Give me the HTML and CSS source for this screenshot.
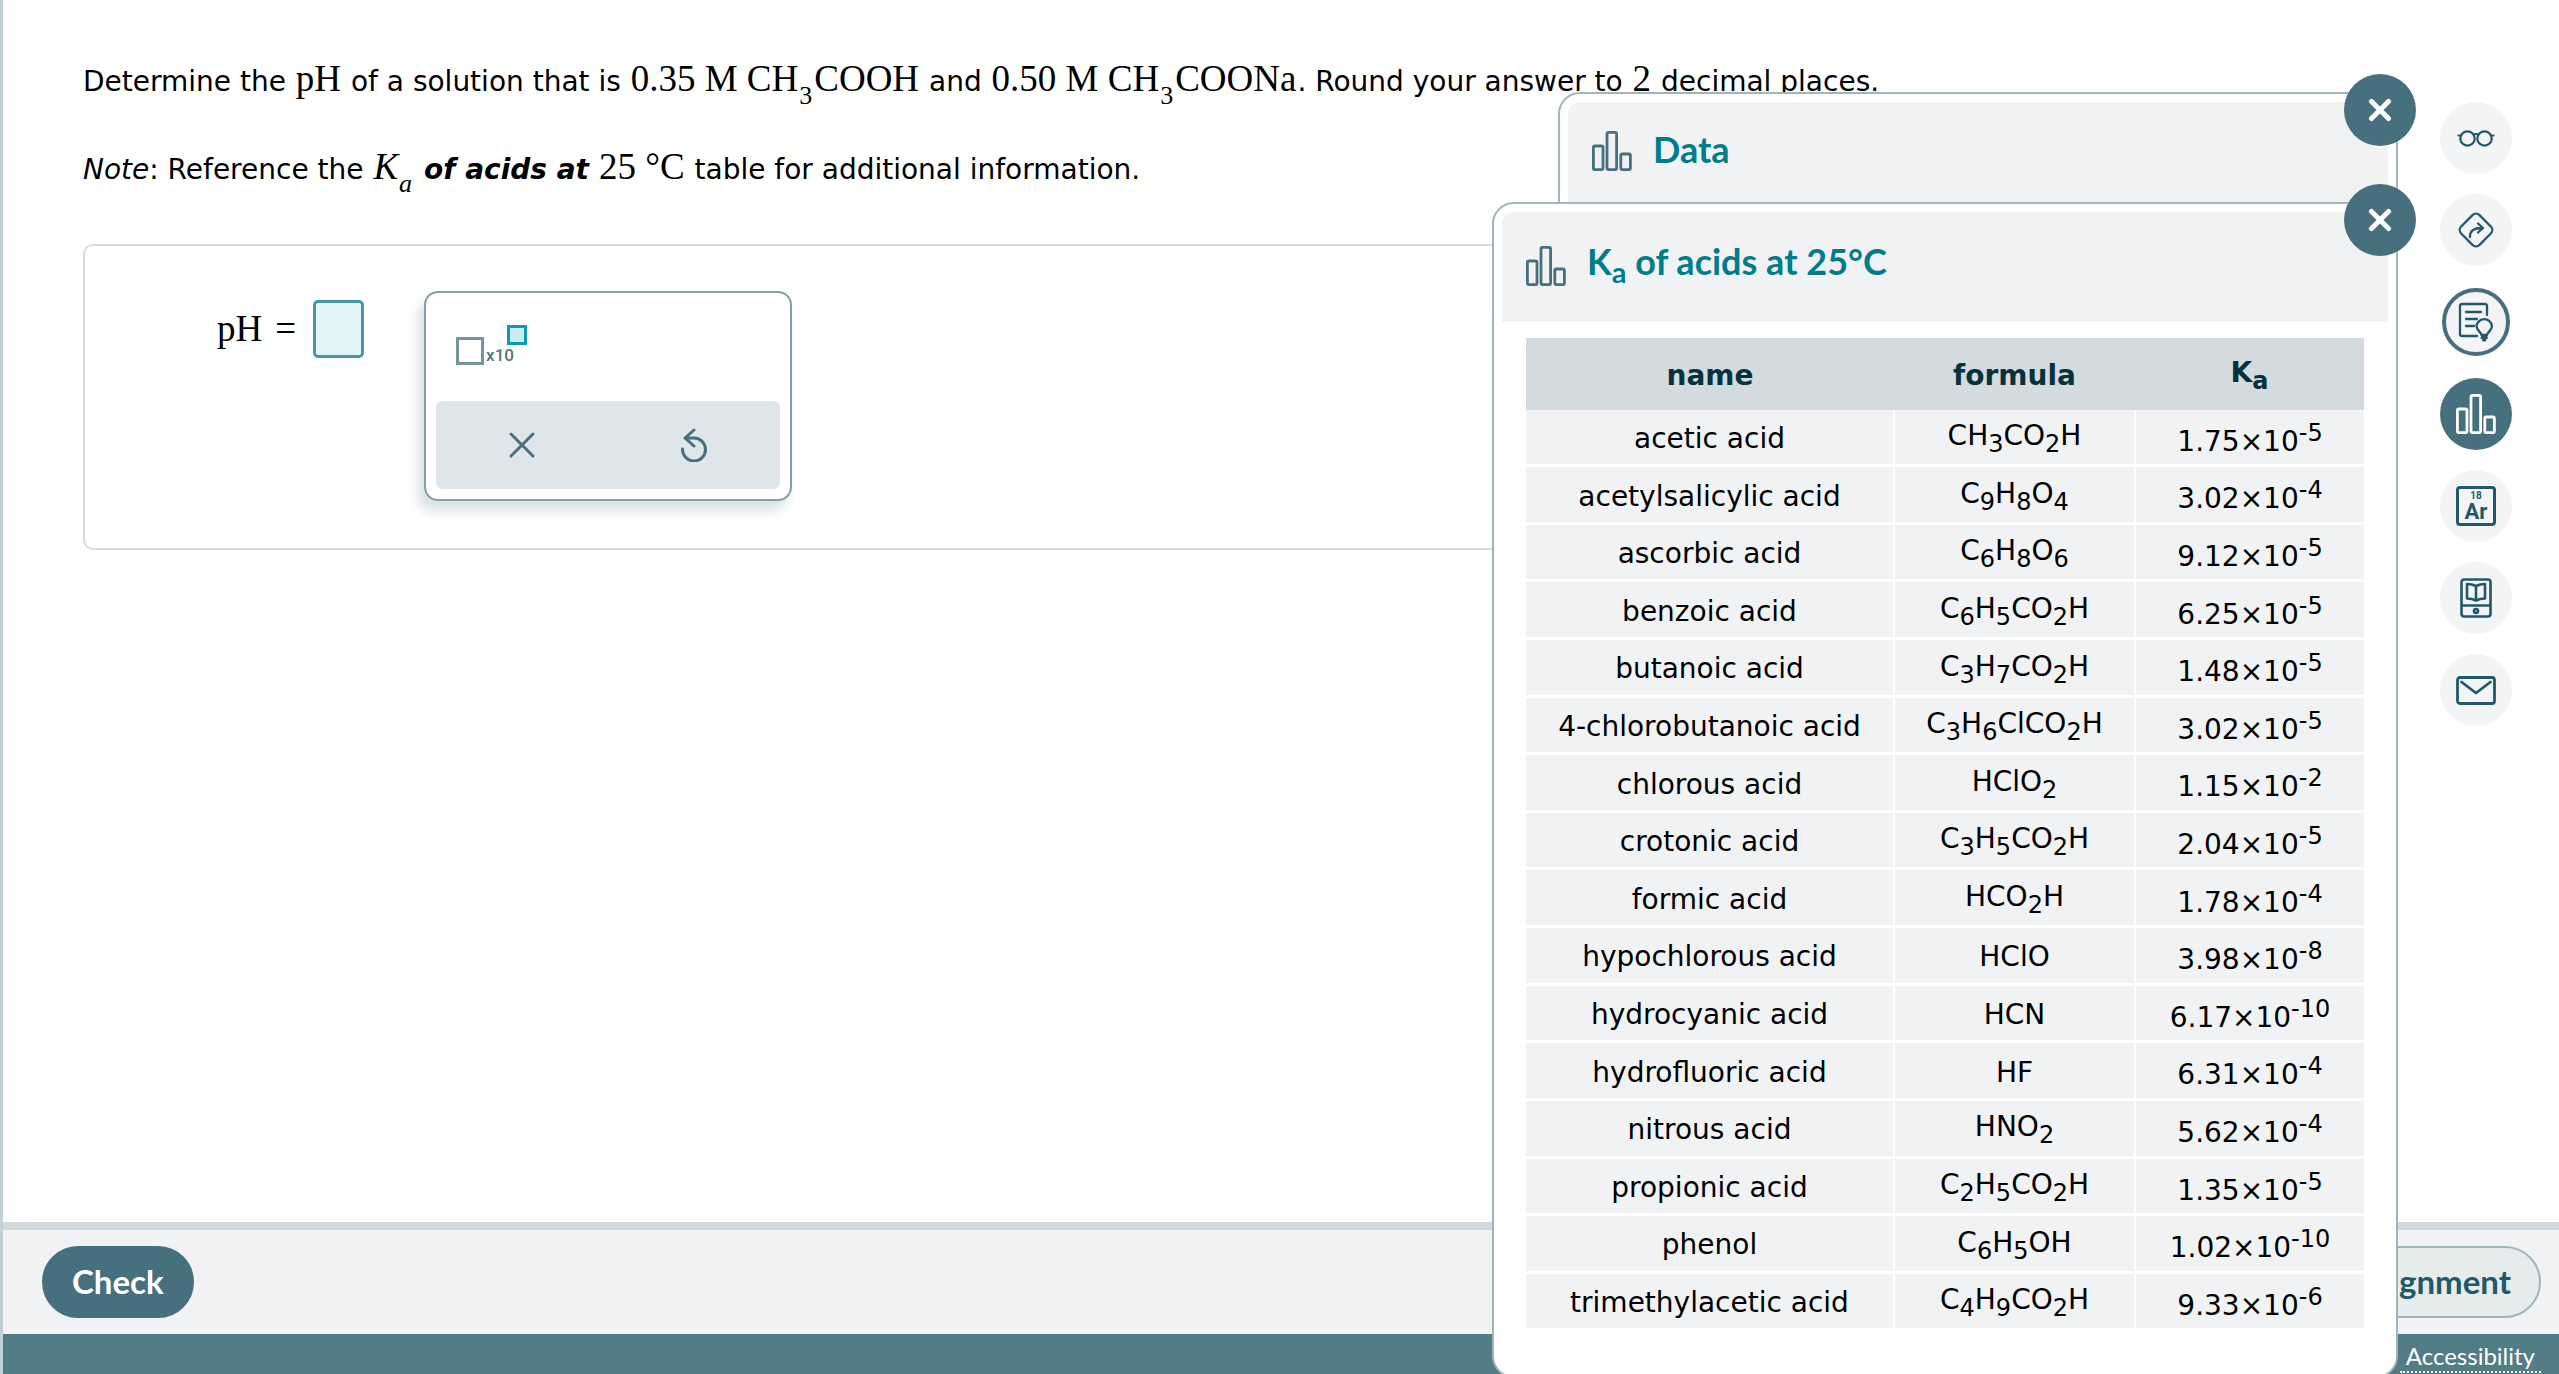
FILE: index.html
```
<!DOCTYPE html>
<html lang="en">
<head>
    <meta charset="UTF-8">
    <meta name="viewport" content="width=device-width, initial-scale=1.0">
    <title>Buffer pH</title>
    <link rel="stylesheet" href="styles.css">
</head>
<body>
    <svg class="sprite" aria-hidden="true">
        <symbol id="bars" viewBox="0 0 40 40">
            <g fill="none" stroke="currentColor" stroke-width="2.8" stroke-linejoin="round">
                <rect x="1.4" y="15" width="9.6" height="23.6" rx="1.5"/>
                <rect x="15" y="1.4" width="9.6" height="37.2" rx="1.5"/>
                <rect x="28.8" y="23" width="9.6" height="15.6" rx="1.5"/>
            </g>
        </symbol>
        <symbol id="close" viewBox="0 0 24 24">
            <path d="M3.5 3.5L20.5 20.5M20.5 3.5L3.5 20.5" fill="none" stroke="currentColor" stroke-width="5" stroke-linecap="round"/>
        </symbol>
    </svg>

    <div class="work">
        <main class="question">
            <p>Determine the <span class="math">pH</span> of a solution that is <span class="math">0.35 M CH<sub>3</sub>COOH</span> and <span class="math">0.50 M CH<sub>3</sub>COONa</span>. Round your answer to <span class="math">2</span> decimal places.</p>
            <p><i>Note</i>: Reference the <span class="math"><i>K<sub>a</sub></i></span> <b><i>of acids at</i></b> <span class="math">25 °C</span> table for additional information.</p>

            <div class="answer">
                <label class="math" for="ph">pH<span>=</span></label>
                <input type="text" id="ph" class="blank">
                <div class="palette">
                    <button class="sci" aria-label="Scientific notation">
                        <span class="sci-base"></span>
                        <span class="sci-ten">x10</span>
                        <span class="sci-exp"></span>
                    </button>
                    <div class="palette-actions">
                        <button aria-label="Clear">
                            <svg width="28" height="28" viewBox="0 0 28 28" fill="none" stroke="currentColor" stroke-width="3" stroke-linecap="round"><path d="M3 3L25 25M25 3L3 25"/></svg>
                        </button>
                        <button aria-label="Reset">
                            <svg width="28" height="34" viewBox="0 0 28 34" fill="none" stroke="currentColor" stroke-width="3" stroke-linecap="round" stroke-linejoin="round"><path d="M14 2L5 10L14 18M5 10H14A11.5 11.5 0 1 1 2.5 21"/></svg>
                        </button>
                    </div>
                </div>
            </div>
        </main>

        <nav class="rail" aria-label="Tools">
            <button aria-label="Reading view">
                <svg width="38" height="18" viewBox="0 0 38 18" fill="none" stroke="currentColor" stroke-width="2.2" stroke-linecap="round"><circle cx="10.5" cy="9.5" r="7.2"/><circle cx="27.5" cy="9.5" r="7.2"/><path d="M1.5 6.5H4M34 6.5H36.5M17 5.5Q19 4.5 21 5.5"/></svg>
            </button>
            <button aria-label="Directions">
                <svg width="38" height="38" viewBox="0 0 38 38" fill="none" stroke="currentColor" stroke-width="2.3" stroke-linecap="round" stroke-linejoin="round"><rect x="6" y="6" width="26" height="26" rx="5" transform="rotate(45 19 19)"/><path d="M13 26Q12.5 17 25 17M21 12.5L26 17L21 21.5"/></svg>
            </button>
            <button class="outlined" aria-label="Hints">
                <svg width="36" height="40" viewBox="0 0 36 40" fill="none" stroke="currentColor" stroke-width="2.3" stroke-linecap="round" stroke-linejoin="round"><path d="M29 13V4Q29 2 27 2H4Q2 2 2 4V32Q2 34 4 34H19M8 10H23M8 17H19M8 24H16"/><path d="M23.5 33C23 30 18.500 28.5 18.5 24A7.800 7.800 0 0 1 34 24C34 28.5 29.5 30 29 33Z"/><path d="M24 35.5H28.5M25.5 38H27" stroke-width="3"/></svg>
            </button>
            <button class="active" aria-label="Data">
                <svg width="40" height="40"><use href="#bars"/></svg>
            </button>
            <button aria-label="Periodic table">
                <span class="tile"><small>18</small><b>Ar</b></span>
            </button>
            <button aria-label="eBook">
                <svg width="32" height="40" viewBox="0 0 32 40" fill="none" stroke="currentColor" stroke-width="2.6" stroke-linejoin="round"><rect x="1.5" y="1.5" width="29" height="37" rx="2.5"/><path d="M1.5 27.5H30.5M16 8V22.500M16 8Q12 6 7 6V20.5Q12 20.5 16 22.5Q20 20.5 25 20.5V6Q20 6 16 8"/><circle cx="16" cy="33" r="2"/></svg>
            </button>
            <button aria-label="Message">
                <svg width="40" height="29" viewBox="0 0 40 29" fill="none" stroke="currentColor" stroke-width="2.8" stroke-linecap="round" stroke-linejoin="round"><rect x="1.5" y="1.5" width="37" height="26" rx="2.5"/><path d="M5.5 6L20 17L34.5 6"/></svg>
            </button>
        </nav>
    </div>

    <div class="actions">
        <button class="btn primary">Check</button>
        <button class="btn secondary">Assignment</button>
    </div>
    <footer class="legal">
        <a href="#">Accessibility</a>
    </footer>

    <section class="panel panel-data">
        <button class="close" aria-label="Close"><svg width="24" height="24"><use href="#close"/></svg></button>
        <div class="panel-head">
            <svg width="40" height="40"><use href="#bars"/></svg>
            <h2>Data</h2>
        </div>
    </section>

    <section class="panel panel-acids">
        <button class="close" aria-label="Close"><svg width="24" height="24"><use href="#close"/></svg></button>
        <div class="panel-head">
            <svg width="40" height="40"><use href="#bars"/></svg>
            <h2>K<sub>a</sub> of acids at 25°C</h2>
        </div>
        <table>
            <thead>
                <tr><th>name</th><th>formula</th><th>K<sub>a</sub></th></tr>
            </thead>
            <tbody>
                <tr><td>acetic acid</td><td>CH<sub>3</sub>CO<sub>2</sub>H</td><td>1.75×10<sup>-5</sup></td></tr>
                <tr><td>acetylsalicylic acid</td><td>C<sub>9</sub>H<sub>8</sub>O<sub>4</sub></td><td>3.02×10<sup>-4</sup></td></tr>
                <tr><td>ascorbic acid</td><td>C<sub>6</sub>H<sub>8</sub>O<sub>6</sub></td><td>9.12×10<sup>-5</sup></td></tr>
                <tr><td>benzoic acid</td><td>C<sub>6</sub>H<sub>5</sub>CO<sub>2</sub>H</td><td>6.25×10<sup>-5</sup></td></tr>
                <tr><td>butanoic acid</td><td>C<sub>3</sub>H<sub>7</sub>CO<sub>2</sub>H</td><td>1.48×10<sup>-5</sup></td></tr>
                <tr><td>4-chlorobutanoic acid</td><td>C<sub>3</sub>H<sub>6</sub>ClCO<sub>2</sub>H</td><td>3.02×10<sup>-5</sup></td></tr>
                <tr><td>chlorous acid</td><td>HClO<sub>2</sub></td><td>1.15×10<sup>-2</sup></td></tr>
                <tr><td>crotonic acid</td><td>C<sub>3</sub>H<sub>5</sub>CO<sub>2</sub>H</td><td>2.04×10<sup>-5</sup></td></tr>
                <tr><td>formic acid</td><td>HCO<sub>2</sub>H</td><td>1.78×10<sup>-4</sup></td></tr>
                <tr><td>hypochlorous acid</td><td>HClO</td><td>3.98×10<sup>-8</sup></td></tr>
                <tr><td>hydrocyanic acid</td><td>HCN</td><td>6.17×10<sup>-10</sup></td></tr>
                <tr><td>hydrofluoric acid</td><td>HF</td><td>6.31×10<sup>-4</sup></td></tr>
                <tr><td>nitrous acid</td><td>HNO<sub>2</sub></td><td>5.62×10<sup>-4</sup></td></tr>
                <tr><td>propionic acid</td><td>C<sub>2</sub>H<sub>5</sub>CO<sub>2</sub>H</td><td>1.35×10<sup>-5</sup></td></tr>
                <tr><td>phenol</td><td>C<sub>6</sub>H<sub>5</sub>OH</td><td>1.02×10<sup>-10</sup></td></tr>
                <tr><td>trimethylacetic acid</td><td>C<sub>4</sub>H<sub>9</sub>CO<sub>2</sub>H</td><td>9.33×10<sup>-6</sup></td></tr>
            </tbody>
        </table>
    </section>
</body>
</html>
```
FILE: styles.css
```
* {
    margin: 0;
    padding: 0;
    box-sizing: border-box;
}

body {
    font-family: Verdana, "DejaVu Sans", sans-serif;
    font-size: 28px;
    color: #000;
    background: #fff;
    height: 100vh;
    display: flex;
    flex-direction: column;
    border-left: 3px solid #c0d0d6;
    overflow: hidden;
    position: relative;
}

button {
    font: inherit;
    color: inherit;
    background: none;
    border: none;
    cursor: pointer;
}

svg {
    display: block;
}

.sprite {
    position: absolute;
    width: 0;
    height: 0;
}

/* question */

.work {
    flex: 1;
    display: flex;
    align-items: flex-start;
    gap: 60px;
    padding-right: 47px;
}

.question {
    flex: 1;
    padding: 62px 0 0 80px;
}

.question p {
    line-height: 40px;
    margin-bottom: 48px;
}

.math {
    font-family: "Times New Roman", "Liberation Serif", serif;
    font-size: 37px;
    line-height: 1px;
}

.question p .math {
    margin: 0 1px;
}

.math sub {
    font-size: 26px;
    line-height: 1px;
    vertical-align: -13px;
    margin: 0 2px 0 1px;
}

.answer {
    display: flex;
    align-items: flex-start;
    border: 2px solid #d8dadc;
    border-radius: 10px;
    margin-top: 54px;
    padding: 45px 0 47px 132px;
}

.answer label {
    line-height: 40px;
    margin-top: 18px;
}

.answer label span {
    margin-left: 13px;
}

.blank {
    width: 51px;
    height: 58px;
    margin: 9px 60px 0 17px;
    border: 3px solid #439aa5;
    border-radius: 5px;
    background: #e4f4f8;
    font-size: 28px;
    text-align: center;
    outline: none;
}

.palette {
    width: 368px;
    padding: 10px;
    border: 2px solid #86a0a9;
    border-radius: 14px;
    background: #fff;
    box-shadow: -6px 10px 12px rgba(70, 112, 125, 0.2);
}

.sci {
    display: flex;
    align-items: flex-end;
    margin: 22px 0 36px 20px;
    color: #4f7681;
}

.sci-base {
    width: 28px;
    height: 28px;
    border: 3px solid #76949c;
}

.sci-ten {
    font-family: Roboto, sans-serif;
    font-size: 17px;
    font-weight: 500;
    line-height: 20px;
    margin-left: 2px;
}

.sci-exp {
    width: 20px;
    height: 20px;
    margin: 0 0 20px -7px;
    border: 3px solid #0a9bb5;
    background: #c8ecf2;
}

.palette-actions {
    display: flex;
    height: 88px;
    border-radius: 6px;
    background: #dfe6e9;
    color: #46707d;
}

.palette-actions button {
    flex: 1;
    display: flex;
    align-items: center;
    justify-content: center;
}

/* right tool rail */

.rail {
    display: flex;
    flex-direction: column;
    gap: 20px;
    padding-top: 102px;
}

.rail button {
    width: 72px;
    height: 72px;
    display: flex;
    align-items: center;
    justify-content: center;
    border-radius: 50%;
    background: #f2f4f5;
    color: #22596a;
}

.rail .outlined {
    width: 68px;
    height: 68px;
    margin: 2px;
    border: 4px solid #46707d;
}

.rail .active {
    background: #46707d;
    color: #fff;
}

.tile {
    width: 40px;
    height: 40px;
    display: flex;
    flex-direction: column;
    align-items: center;
    border: 3px solid #22596a;
    border-radius: 4px;
    font-family: Roboto, sans-serif;
}

.tile small {
    font-size: 10px;
    font-weight: 700;
    line-height: 14px;
}

.tile b {
    font-size: 22px;
    line-height: 18px;
}

/* bottom bars */

.actions {
    display: flex;
    justify-content: space-between;
    padding: 16px 18px 16px 39px;
    border-top: 8px solid #d0dadd;
    background: #f1f2f4;
}

.btn {
    height: 72px;
    padding: 0 28px 3px;
    border: 2px solid #46707d;
    border-radius: 36px;
    font-family: "Proxima Nova", Lato, sans-serif;
    font-size: 33px;
    font-weight: 700;
}

.primary {
    background: #46707d;
    color: #fff;
}

.secondary {
    background: #e6ecec;
    border-color: #9db8bb;
    color: #22596a;
}

.legal {
    display: flex;
    justify-content: flex-end;
    height: 40px;
    padding-right: 18px;
    background: #527c86;
}

.legal a {
    padding: 8px 6px 0;
    height: 39px;
    border-bottom: 2px dotted #fff;
    font-family: "Proxima Nova", Lato, sans-serif;
    font-size: 24px;
    line-height: 28px;
    color: #fff;
    text-decoration: none;
}

/* floating panels */

.panel {
    position: absolute;
    right: 161px;
    padding: 8px;
    border: 2px solid #9fb7ba;
    border-radius: 22px;
    background: #fff;
}

.panel-data {
    top: 92px;
    width: 840px;
    height: 600px;
}

.panel-acids {
    top: 202px;
    width: 906px;
    padding-bottom: 48px;
}

.panel-head {
    display: flex;
    align-items: center;
    gap: 21px;
    height: 110px;
    padding: 0 24px 12px;
    border-radius: 12px 0 0 0;
    background: #f1f2f4;
    color: #46707d;
}

.panel-acids .panel-head {
    padding-bottom: 2px;
}

.panel-head h2 {
    padding-bottom: 4px;
    font-family: "Proxima Nova", Lato, sans-serif;
    font-size: 36px;
    font-weight: 700;
    color: #007c8c;
}

.panel-head sub {
    font-size: 29px;
}

.close {
    position: absolute;
    top: -20px;
    right: -20px;
    width: 72px;
    height: 72px;
    display: flex;
    align-items: center;
    justify-content: center;
    border-radius: 50%;
    background: #46707d;
    color: #fff;
}

table {
    width: 838px;
    height: 990px;
    margin: 16px 0 0 24px;
    border-collapse: collapse;
    table-layout: fixed;
    text-align: center;
}

th {
    height: 72px;
    padding-top: 2px;
    background: #d3dbde;
    color: #06323e;
}

th:nth-child(1) {
    width: 368px;
}

th:nth-child(2) {
    width: 241px;
}

td {
    padding-top: 3px;
    background: #f1f2f4;
    border-bottom: 3px solid #fff;
}

td + td {
    border-left: 2px solid #fff;
}

tr:last-child td {
    border-bottom: none;
}

td sub,
td sup,
th sub {
    font-size: 24px;
}
```
